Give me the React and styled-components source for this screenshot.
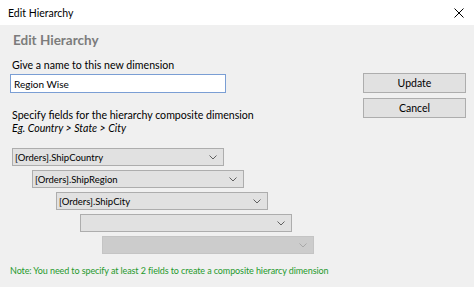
import React from "react";
import styled, { createGlobalStyle } from "styled-components";

const Global = createGlobalStyle`
  html, body { margin: 0; padding: 0; }
  body { width: 474px; height: 287px; overflow: hidden; background: #f0f0f0;
    font-family: Lato, "Noto Sans", sans-serif; }
`;

const Window = styled.div`
  width: 474px;
  height: 287px;
  display: flex;
  flex-direction: column;
  background: #f0f0f0;
`;

const TitleBar = styled.div`
  height: 25px;
  flex: none;
  background: #ffffff;
  display: flex;
  align-items: center;
  justify-content: space-between;
  padding: 0 8px 0 8px;
  font-size: 10.5px;
  color: #000;
`;

const Close = styled.svg`
  width: 10px;
  height: 10px;
  margin-right: 2px;
`;

const Body = styled.div`
  flex: 1;
  display: flex;
  flex-direction: column;
  padding: 5px 8px 0 10px;
`;

const Heading = styled.div`
  font-size: 13.5px;
  font-weight: 700;
  color: #7c7c7c;
  padding-left: 3px;
  height: 20px;
  line-height: 20px;
`;

const Main = styled.div`
  display: grid;
  grid-template-columns: 1fr 103px;
  margin-top: 9px;
`;

const Form = styled.div`
  display: flex;
  flex-direction: column;
  min-width: 0;
`;

const Label = styled.div`
  font-size: 10.6px;
  color: #000;
  line-height: 13px;
  padding-left: 2px;
  font-style: ${(p) => (p.$italic ? "italic" : "normal")};
`;

const NameInput = styled.input`
  box-sizing: border-box;
  width: 216px;
  height: 19px;
  margin: 2px 0 0 0;
  border: 1px solid #7a9ed4;
  background: #fff;
  font: inherit;
  font-size: 10px;
  padding: 0 3px;
  color: #000;
  outline: none;
`;

const Spacer = styled.div`
  height: ${(p) => p.$h}px;
`;

const Buttons = styled.div`
  display: flex;
  flex-direction: column;
  gap: 5px;
  margin-top: 14px;
`;

const Button = styled.button`
  box-sizing: border-box;
  width: 103px;
  height: 20px;
  background: #e1e1e1;
  border: 1px solid #adadad;
  font: inherit;
  font-size: 10.5px;
  color: #000;
  padding: 0;
`;

const Fields = styled.div`
  display: flex;
  flex-direction: column;
  gap: 4px;
  margin-top: 13px;
`;

const Select = styled.div`
  box-sizing: border-box;
  width: 212px;
  height: 18px;
  margin-left: ${(p) => p.$indent}px;
  border: 1px solid ${(p) => (p.$disabled ? "#c4c4c4" : "#adadad")};
  background: ${(p) => (p.$disabled ? "#cccccc" : "#e1e1e1")};
  display: flex;
  align-items: center;
  justify-content: space-between;
  padding: 0 6px 0 2px;
  font-size: 9.5px;
  color: #000;
`;

const Chevron = styled.svg`
  width: 8px;
  height: 5px;
`;

const Note = styled.div`
  font-size: 9px;
  letter-spacing: -0.1px;
  line-height: 13px;
  color: #1f9a2d;
  margin-top: 10px;
  white-space: nowrap;
`;

const fields = [
  { indent: 2, value: "[Orders].ShipCountry" },
  { indent: 22, value: "[Orders].ShipRegion" },
  { indent: 46, value: "[Orders].ShipCity" },
  { indent: 70, value: "" },
  { indent: 92, value: "", disabled: true },
];

export default function App() {
  return (
    <Window>
      <Global />
      <TitleBar>
        <span>Edit Hierarchy</span>
        <Close viewBox="0 0 10 10">
          <path d="M0.5 0.5 L9.5 9.5 M9.5 0.5 L0.5 9.5" stroke="#000" strokeWidth="1" fill="none" />
        </Close>
      </TitleBar>
      <Body>
        <Heading>Edit Hierarchy</Heading>
        <Main>
          <Form>
            <Label>Give a name to this new dimension</Label>
            <NameInput defaultValue="Region Wise" />
            <Spacer $h={16} />
            <Label>Specify fields for the hierarchy composite dimension</Label>
            <Label $italic>Eg. Country &gt; State &gt; City</Label>
            <Fields>
              {fields.map((f, i) => (
                <Select key={i} $indent={f.indent} $disabled={f.disabled}>
                  <span>{f.value}</span>
                  <Chevron viewBox="0 0 8 5">
                    <path d="M0.5 0.5 L4 4 L7.5 0.5" stroke={f.disabled ? "#a8a8a8" : "#606060"} strokeWidth="1" fill="none" />
                  </Chevron>
                </Select>
              ))}
            </Fields>
            <Note>Note: You need to specify at least 2 fields to create a composite hierarcy dimension</Note>
          </Form>
          <Buttons>
            <Button>Update</Button>
            <Button>Cancel</Button>
          </Buttons>
        </Main>
      </Body>
    </Window>
  );
}
